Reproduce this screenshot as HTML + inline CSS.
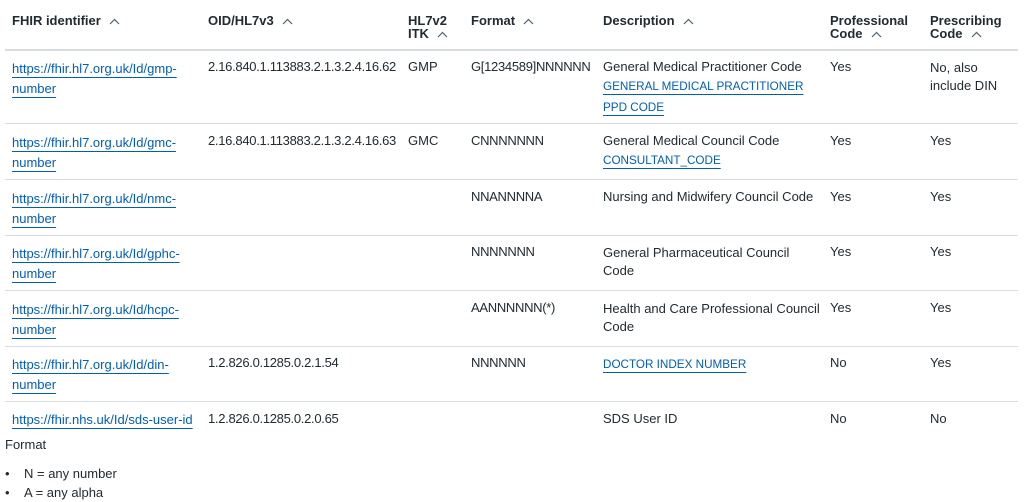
<!DOCTYPE html>
<html><head><meta charset="utf-8"><style>
body{margin:0;width:1024px;height:502px;background:#fff;font-family:"Liberation Sans",sans-serif;font-size:13px;color:#212b32;position:relative;overflow:hidden}
.t{position:absolute;line-height:16px;white-space:nowrap}
.h{font-weight:bold;line-height:13px}
a{color:#005eb8;text-decoration:underline;text-underline-offset:4px;text-decoration-thickness:1px}
.l{line-height:20px}
.cap{font-size:11.7px}
.n{letter-spacing:-0.3px}
.hr{position:absolute;left:5px;width:1013px;height:1px;background:#d8dde0}
svg.c{display:inline-block;vertical-align:middle;margin-left:8px}
</style></head><body>
<div class="t h" style="left:12px;top:14px">FHIR identifier<svg class="c" width="11" height="7"><polyline points="1,6 5.5,1.5 10,6" fill="none" stroke="#4c6272" stroke-width="1.2"/></svg></div>
<div class="t h" style="left:208px;top:14px">OID/HL7v3<svg class="c" width="11" height="7"><polyline points="1,6 5.5,1.5 10,6" fill="none" stroke="#4c6272" stroke-width="1.2"/></svg></div>
<div class="t h" style="left:408px;top:14px">HL7v2<br>ITK<svg class="c" width="11" height="7"><polyline points="1,6 5.5,1.5 10,6" fill="none" stroke="#4c6272" stroke-width="1.2"/></svg></div>
<div class="t h" style="left:471px;top:14px">Format<svg class="c" width="11" height="7"><polyline points="1,6 5.5,1.5 10,6" fill="none" stroke="#4c6272" stroke-width="1.2"/></svg></div>
<div class="t h" style="left:603px;top:14px">Description<svg class="c" width="11" height="7"><polyline points="1,6 5.5,1.5 10,6" fill="none" stroke="#4c6272" stroke-width="1.2"/></svg></div>
<div class="t h" style="left:830px;top:14px">Professional<br>Code<svg class="c" width="11" height="7"><polyline points="1,6 5.5,1.5 10,6" fill="none" stroke="#4c6272" stroke-width="1.2"/></svg></div>
<div class="t h" style="left:930px;top:14px">Prescribing<br>Code<svg class="c" width="11" height="7"><polyline points="1,6 5.5,1.5 10,6" fill="none" stroke="#4c6272" stroke-width="1.2"/></svg></div>
<div class="hr" style="top:49px;height:2px"></div>

<div class="t l" style="left:12px;top:59px"><a>https://fhir.hl7.org.uk/Id/gmp-</a><br><a>number</a></div>
<div class="t n" style="left:208px;top:59px">2.16.840.1.113883.2.1.3.2.4.16.62</div>
<div class="t" style="left:408px;top:59px">GMP</div>
<div class="t n" style="left:471px;top:59px">G[1234589]NNNNNN</div>
<div class="t" style="left:603px;top:59px">General Medical Practitioner Code</div>
<div class="t l" style="left:603px;top:76px"><a class="cap">GENERAL MEDICAL PRACTITIONER</a><br><a class="cap">PPD CODE</a></div>
<div class="t" style="left:830px;top:59px">Yes</div>
<div class="t" style="left:930px;top:59px;line-height:18px">No, also<br>include DIN</div>
<div class="hr" style="top:123px"></div>

<div class="t l" style="left:12px;top:133px"><a>https://fhir.hl7.org.uk/Id/gmc-</a><br><a>number</a></div>
<div class="t n" style="left:208px;top:133px">2.16.840.1.113883.2.1.3.2.4.16.63</div>
<div class="t" style="left:408px;top:133px">GMC</div>
<div class="t n" style="left:471px;top:133px">CNNNNNNN</div>
<div class="t" style="left:603px;top:133px">General Medical Council Code</div>
<div class="t l" style="left:603px;top:150px"><a class="cap">CONSULTANT_CODE</a></div>
<div class="t" style="left:830px;top:133px">Yes</div>
<div class="t" style="left:930px;top:133px">Yes</div>
<div class="hr" style="top:179px"></div>

<div class="t l" style="left:12px;top:189px"><a>https://fhir.hl7.org.uk/Id/nmc-</a><br><a>number</a></div>
<div class="t n" style="left:471px;top:189px">NNANNNNA</div>
<div class="t" style="left:603px;top:189px">Nursing and Midwifery Council Code</div>
<div class="t" style="left:830px;top:189px">Yes</div>
<div class="t" style="left:930px;top:189px">Yes</div>
<div class="hr" style="top:235px"></div>

<div class="t l" style="left:12px;top:244px"><a>https://fhir.hl7.org.uk/Id/gphc-</a><br><a>number</a></div>
<div class="t n" style="left:471px;top:244px">NNNNNNN</div>
<div class="t" style="left:603px;top:244px;line-height:18px">General Pharmaceutical Council<br>Code</div>
<div class="t" style="left:830px;top:244px">Yes</div>
<div class="t" style="left:930px;top:244px">Yes</div>
<div class="hr" style="top:290px"></div>

<div class="t l" style="left:12px;top:300px"><a>https://fhir.hl7.org.uk/Id/hcpc-</a><br><a>number</a></div>
<div class="t n" style="left:471px;top:300px">AANNNNNN(*)</div>
<div class="t" style="left:603px;top:300px;line-height:18px">Health and Care Professional Council<br>Code</div>
<div class="t" style="left:830px;top:300px">Yes</div>
<div class="t" style="left:930px;top:300px">Yes</div>
<div class="hr" style="top:346px"></div>

<div class="t l" style="left:12px;top:355px"><a>https://fhir.hl7.org.uk/Id/din-</a><br><a>number</a></div>
<div class="t n" style="left:208px;top:355px">1.2.826.0.1285.0.2.1.54</div>
<div class="t n" style="left:471px;top:355px">NNNNNN</div>
<div class="t l" style="left:603px;top:354px"><a class="cap">DOCTOR INDEX NUMBER</a></div>
<div class="t" style="left:830px;top:355px">No</div>
<div class="t" style="left:930px;top:355px">Yes</div>
<div class="hr" style="top:401px"></div>

<div class="t l" style="left:12px;top:410px"><a>https://fhir.nhs.uk/Id/sds-user-id</a></div>
<div class="t n" style="left:208px;top:411px">1.2.826.0.1285.0.2.0.65</div>
<div class="t" style="left:603px;top:411px">SDS User ID</div>
<div class="t" style="left:830px;top:411px">No</div>
<div class="t" style="left:930px;top:411px">No</div>

<div class="t" style="left:5px;top:437px">Format</div>
<div class="t" style="left:5px;top:466px">•</div>
<div class="t" style="left:24px;top:466px">N = any number</div>
<div class="t" style="left:5px;top:485px">•</div>
<div class="t" style="left:24px;top:485px">A = any alpha</div>
</body></html>
